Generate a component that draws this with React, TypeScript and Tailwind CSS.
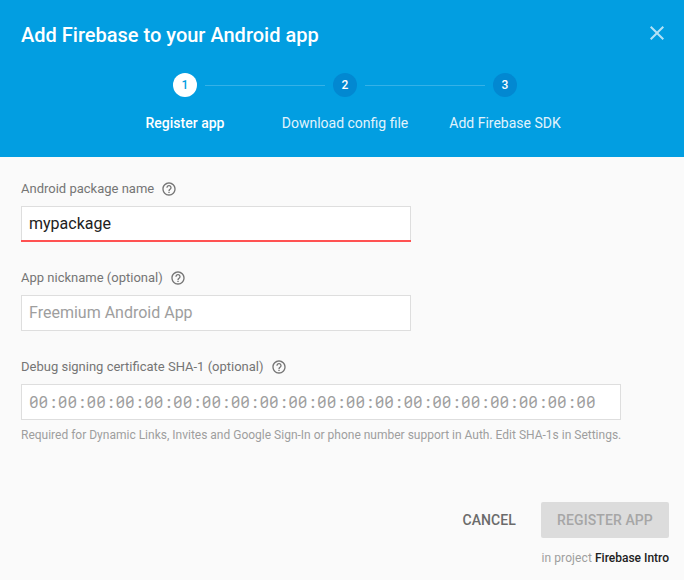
import { MdClose, MdHelpOutline } from 'react-icons/md';

const steps = [
  { number: 1, label: 'Register app', active: true },
  { number: 2, label: 'Download config file', active: false },
  { number: 3, label: 'Add Firebase SDK', active: false },
];

function FieldLabel({ id, text }: { id: string; text: string }) {
  return (
    <div className="flex h-4 items-center gap-[7px] text-[#757575]">
      <label htmlFor={id} className="text-[13px] leading-4">{text}</label>
      <MdHelpOutline size={16} />
    </div>
  );
}

export default function App() {
  return (
    <main className="flex h-[580px] w-[684px] flex-col overflow-hidden bg-[#fafafa] font-['Roboto',sans-serif]">
      <header className="h-[157px] bg-[#029ee1] text-white">
        <div className="flex h-[47px] items-start justify-between pt-[21px] pr-[15px] pl-[21px]">
          <h1 className="pt-0.5 text-[20px] leading-6 font-medium">Add Firebase to your Android app</h1>
          <button aria-label="Close" className="text-[#b3e2f6]">
            <MdClose size={24} />
          </button>
        </div>
        <ol className="mt-[26px] ml-[105px] flex">
          {steps.map((step, i) => (
            <li key={step.number} className="flex w-40 flex-col items-center">
              <div className="flex w-full items-center">
                <span className={i > 0 ? 'mr-2 h-px flex-1 bg-[#35b1e7]' : 'mr-2 h-px flex-1'} />
                <span
                  className={
                    step.active
                      ? 'flex size-6 items-center justify-center rounded-full bg-white text-xs font-medium text-[#029ee1]'
                      : 'flex size-6 items-center justify-center rounded-full bg-[#0288d1] text-xs font-medium'
                  }
                >
                  {step.number}
                </span>
                <span className={i < 2 ? 'ml-2 h-px flex-1 bg-[#35b1e7]' : 'ml-2 h-px flex-1'} />
              </div>
              <span className={step.active ? 'mt-4 text-sm font-medium' : 'mt-4 text-sm text-[#e1f3fc]'}>
                {step.label}
              </span>
            </li>
          ))}
        </ol>
      </header>

      <form className="px-[21px] pt-6">
        <FieldLabel id="package" text="Android package name" />
        <div className="mt-[9px] h-9 w-[390px] border-b-2 border-[#ff5252]">
          <input
            id="package"
            defaultValue="mypackage"
            className="block h-[34px] w-full border border-b-0 border-[#dedede] bg-white px-[7px] text-base text-[#212121] outline-none"
          />
        </div>
        <div className="mt-7">
          <FieldLabel id="nickname" text="App nickname (optional)" />
        </div>
        <input
          id="nickname"
          placeholder="Freemium Android App"
          className="mt-[9px] block h-9 w-[390px] border border-[#dedede] bg-white px-[7px] pb-0.5 text-base outline-none placeholder:text-[#9e9e9e]"
        />
        <div className="mt-7">
          <FieldLabel id="sha" text="Debug signing certificate SHA-1 (optional)" />
        </div>
        <input
          id="sha"
          placeholder="00:00:00:00:00:00:00:00:00:00:00:00:00:00:00:00:00:00:00:00"
          className="mt-[9px] block h-9 w-[600px] border border-[#dedede] bg-white px-[7px] pb-0.5 font-['Roboto_Mono',monospace] text-base outline-none placeholder:text-[#9e9e9e]"
        />
        <p className="mt-[7px] text-xs leading-4 whitespace-nowrap text-[#9e9e9e]">
          Required for Dynamic Links, Invites and Google Sign-In or phone number support in Auth. Edit SHA-1s in Settings.
        </p>
      </form>

      <footer className="mt-auto pr-[15px] pb-[14px]">
        <div className="flex items-center justify-end">
          <button className="mr-[25px] text-sm font-medium tracking-[0.1px] text-[#6b6b6b]">CANCEL</button>
          <button className="h-9 w-32 rounded-xs bg-[#dcdcdc] text-sm font-medium tracking-[0.1px] text-[#a6a6a6]">REGISTER APP</button>
        </div>
        <p className="mt-3 text-right text-xs leading-4 text-[#9e9e9e]">
          <span className="tracking-[0.1px]">in project </span>
          <span className="font-medium text-[#212121]">Firebase Intro</span>
        </p>
      </footer>
    </main>
  );
}
